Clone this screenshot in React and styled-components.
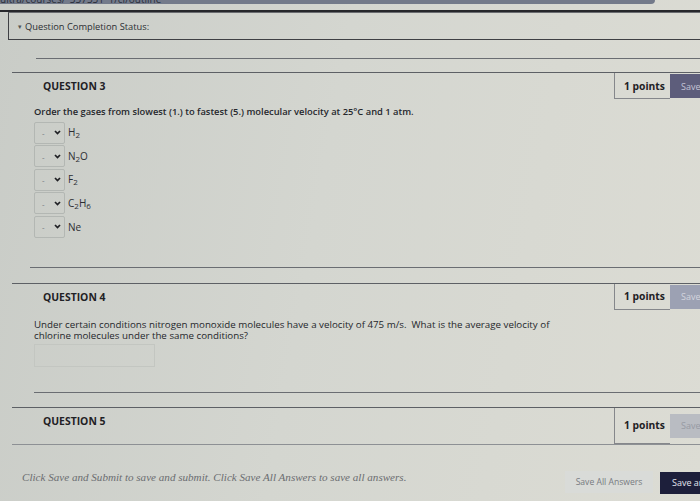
import styled, { createGlobalStyle } from "styled-components";

const GlobalStyle = createGlobalStyle`
  html, body {
    margin: 0;
    padding: 0;
    overflow: hidden;
  }
  body {
    background: linear-gradient(100deg, #c9ccc7 0%, #d4d6d0 45%, #dcdcd4 100%);
    font-family: "Open Sans", "Liberation Sans", sans-serif;
    color: #2b2d32;
  }
`

const gases = ["H2", "N2O", "F2", "C2H6", "Ne"]

// digits in a formula become subscripts
const Formula = ({ text }) => (
  <>
    {text.split(/(\d)/).filter(Boolean).map((part, i) =>
      /\d/.test(part) ? <Sub key={i}>{part}</Sub> : <span key={i}>{part}</span>
    )}
  </>
)

const Chevron = () => (
  <svg width="7" height="5" viewBox="0 0 7 5">
    <polyline points="1,1 3.5,3.6 6,1" fill="none" stroke="#1f2024" strokeWidth="1.7" />
  </svg>
)

const App = () => {
  return (
    <Page>
      <GlobalStyle />

      {/* browser address bar bleeding in at the top of the photo */}
      <TopBar>
        <UrlBar><UrlText>ultra/courses/_337331_1/cl/outline</UrlText></UrlBar>
      </TopBar>

      <StatusBox>
        <StatusArrow>▾</StatusArrow>
        Question Completion Status:
      </StatusBox>

      <Rule $inset={36} $top={18} />

      <Question $top={13}>
        <QuestionHead>
          <Title>QUESTION 3</Title>
          <Points>1 points</Points>
          <SaveButton $tone="dark">Save</SaveButton>
        </QuestionHead>
        <Body>
          <Prompt $weight={600} $size={9.35}>
            Order the gases from slowest (1.) to fastest (5.) molecular velocity at 25°C and 1 atm.
          </Prompt>
          <DropList>
            {gases.map(g => (
              <DropRow key={g}>
                <Select>
                  <Dash>-</Dash>
                  <Chevron />
                </Select>
                <GasLabel><Formula text={g} /></GasLabel>
              </DropRow>
            ))}
          </DropList>
        </Body>
        <Rule $inset={18} $top={29} />
      </Question>

      <Question $top={15}>
        <QuestionHead>
          <Title>QUESTION 4</Title>
          <Points>1 points</Points>
          <SaveButton $tone="mid">Save</SaveButton>
        </QuestionHead>
        <Body>
          <Prompt $weight={500} $size={9.75} $top={9}>
            Under certain conditions nitrogen monoxide molecules have a velocity of 475 m/s.&nbsp; What is the average velocity of<br />
            chlorine molecules under the same conditions?
          </Prompt>
          <AnswerInput />
        </Body>
        <Rule $inset={22} $top={25} />
      </Question>

      <Question $top={14}>
        <QuestionHead $tall>
          <Title>QUESTION 5</Title>
          <Points>1 points</Points>
          <SaveButton $tone="light">Save</SaveButton>
        </QuestionHead>
      </Question>

      <Footer>
        <FooterNote>Click Save and Submit to save and submit. Click Save All Answers to save all answers.</FooterNote>
        <SaveAll>Save All Answers</SaveAll>
        <Submit>Save and Submit</Submit>
      </Footer>
    </Page>
  )
}

const Page = styled.div`
  width: 740px;
  height: 501px;
  display: flex;
  flex-direction: column;
  overflow: hidden;
  & > * {
    flex-shrink: 0;
  }
`

const TopBar = styled.div`
  height: 10px;
  border-bottom: 2px solid #26272b;
  display: flex;
  align-items: flex-start;
`

const UrlBar = styled.div`
  width: 655px;
  height: 4px;
  background: #737a8a;
  border-bottom-right-radius: 4px;
  overflow: hidden;
`

const UrlText = styled.div`
  font-size: 10px;
  line-height: 10px;
  margin-top: -6px;
  color: #2a2f3a;
  white-space: nowrap;
`

const StatusBox = styled.div`
  margin-left: 8px;
  height: 28px;
  box-sizing: border-box;
  border: 1px solid #3f4044;
  border-right: none;
  border-top-color: #6a6c70;
  display: flex;
  align-items: center;
  padding-left: 9px;
  font-size: 9.3px;
  font-weight: 500;
  color: #2c2e33;
`

const StatusArrow = styled.span`
  font-size: 7px;
  margin-right: 3px;
  color: #555;
`

const Rule = styled.div`
  margin-left: ${p => p.$inset}px;
  margin-top: ${p => p.$top}px;
  height: 1px;
  flex-shrink: 0;
  background: #6a6d72;
`

const Question = styled.section`
  margin: ${p => p.$top}px 0 0 12px;
  border-top: 1px solid #5d6065;
  display: flex;
  flex-direction: column;
`

const QuestionHead = styled.div`
  height: ${p => (p.$tall ? 36 : 26)}px;
  display: flex;
  align-items: stretch;
`

const Title = styled.h3`
  flex: 1;
  margin: 0;
  padding: 7px 0 0 31px;
  font-size: 10.4px;
  line-height: 13px;
  font-weight: 700;
  color: #1f2125;
`

const Points = styled.div`
  width: 56px;
  box-sizing: border-box;
  padding-left: 9px;
  border-left: 1px solid #85878b;
  border-bottom: 1px solid #85878b;
  display: flex;
  align-items: center;
  font-size: 10.3px;
  font-weight: 700;
  color: #1f2125;
`

const saveTones = {
  dark: { bg: "#5d5d7b", fg: "#c4c5d6" },
  mid: { bg: "#9ca1b3", fg: "#d3d5de" },
  light: { bg: "#b9bcc2", fg: "#979aa3" },
}

const SaveButton = styled.button`
  width: 70px;
  height: 24px;
  align-self: center;
  border: none;
  padding: 0 0 0 11px;
  text-align: left;
  font-family: "Open Sans", sans-serif;
  font-size: 9px;
  background: ${p => saveTones[p.$tone].bg};
  color: ${p => saveTones[p.$tone].fg};
`

const Body = styled.div`
  padding-left: 22px;
  display: flex;
  flex-direction: column;
  align-items: flex-start;
`

const Prompt = styled.p`
  margin: ${p => p.$top || 7}px 0 0;
  font-size: ${p => p.$size}px;
  line-height: 11.5px;
  font-weight: ${p => p.$weight};
  color: #25272c;
`

const DropList = styled.div`
  margin-top: 4px;
  display: flex;
  flex-direction: column;
  gap: 1.5px;
`

const DropRow = styled.div`
  display: flex;
  align-items: center;
  gap: 3px;
`

const Select = styled.div`
  width: 31px;
  height: 22px;
  box-sizing: border-box;
  border: 1px solid #b3b7b3;
  border-radius: 2px;
  display: flex;
  align-items: center;
  padding-left: 7px;
  gap: 9px;
`

const Dash = styled.span`
  font-size: 8px;
  color: #707379;
`

const GasLabel = styled.span`
  font-size: 10px;
  font-weight: 500;
  color: #2c2e33;
`

const Sub = styled.sub`
  font-size: 8px;
  vertical-align: -2px;
`

const AnswerInput = styled.div`
  margin-top: 2px;
  width: 121px;
  height: 23px;
  box-sizing: border-box;
  border: 1px solid #c3c6c1;
`

const Footer = styled.footer`
  margin-left: 12px;
  border-top: 1px solid #8d9094;
  flex: 1;
  display: flex;
  align-items: flex-start;
  padding-left: 10px;
`

const FooterNote = styled.p`
  flex: 1;
  margin: 26px 0 0;
  font-family: "Liberation Serif", serif;
  font-style: italic;
  font-size: 11.1px;
  line-height: 13px;
  color: #6b6d70;
`

const SaveAll = styled.button`
  margin-top: 26px;
  width: 88px;
  height: 22px;
  border: none;
  background: #d9dbd8;
  font-family: "Open Sans", sans-serif;
  font-size: 8.6px;
  color: #777a80;
  white-space: nowrap;
`

const Submit = styled.button`
  margin: 27px 0 0 7px;
  width: 80px;
  height: 22px;
  border: none;
  background: #1d1f3b;
  padding: 0 0 0 12px;
  text-align: left;
  font-family: "Open Sans", sans-serif;
  font-size: 9px;
  color: #e4e5ee;
  white-space: nowrap;
  overflow: hidden;
`

export default App
